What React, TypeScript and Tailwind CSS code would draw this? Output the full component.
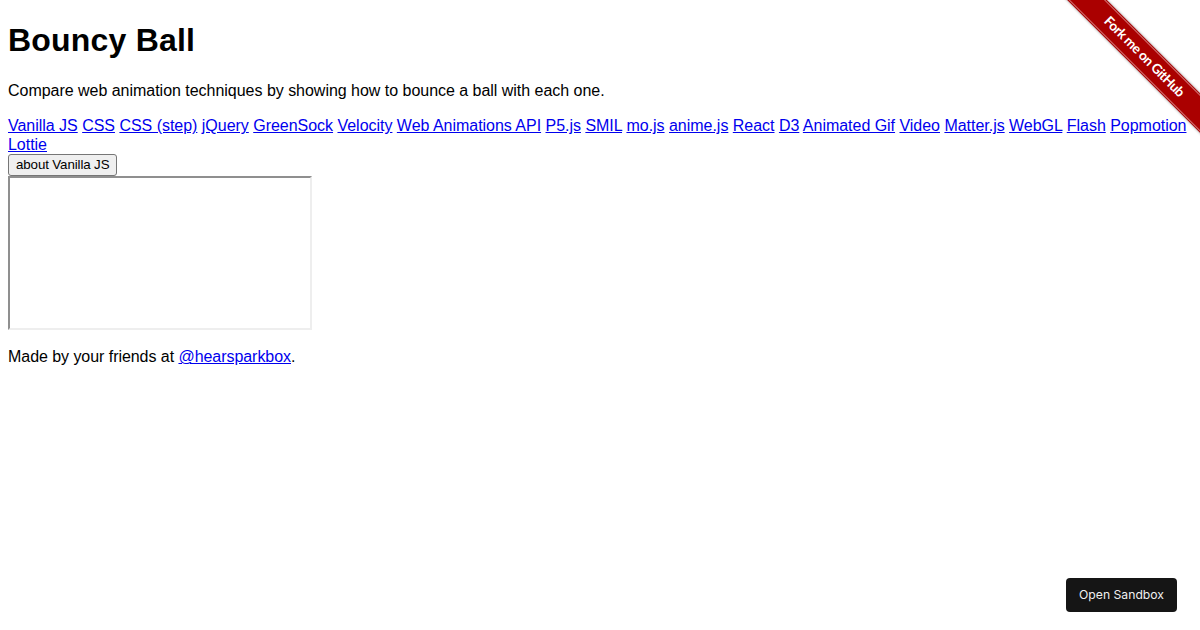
import React from 'react';

const LINKS = [
  'Vanilla JS',
  'CSS',
  'CSS (step)',
  'jQuery',
  'GreenSock',
  'Velocity',
  'Web Animations API',
  'P5.js',
  'SMIL',
  'mo.js',
  'anime.js',
  'React',
  'D3',
  'Animated Gif',
  'Video',
  'Matter.js',
  'WebGL',
  'Flash',
  'Popmotion',
  'Lottie',
];

const linkClass = 'text-[#0000ee] underline';

export default function App() {
  return (
    <div className="relative h-[630px] w-[1200px] overflow-hidden bg-white font-['Liberation_Sans',Arial,sans-serif] text-base leading-[19px] tracking-[-0.025px] text-black">
      <div className="p-2">
        <h1 className="mt-[14px] mb-[22.44px] text-[32px] leading-[37px] font-bold tracking-[0.2px]">Bouncy Ball</h1>
        <p className="my-4">Compare web animation techniques by showing how to bounce a ball with each one.</p>
        <div>
          {LINKS.map((link) => (
            <React.Fragment key={link}>
              <a href="#" className={linkClass}>{link}</a>{' '}
            </React.Fragment>
          ))}
        </div>
        <button className="block h-[22px] rounded-[3px] border border-[#767676] bg-[#efefef] px-[7px] pb-[2px] text-[13.333px] leading-[15px] tracking-[-0.12px]">
          about Vanilla JS
        </button>
        <div className="h-[154px] w-[304px] border-2 border-t-[#8f8f8f] border-r-[#eeeeee] border-b-[#eeeeee] border-l-[#8f8f8f]" />
        <p className="mt-[17px] mb-4 tracking-[-0.05px]">
          Made by your friends at <a href="#" className={linkClass}>@hearsparkbox</a>.
        </p>
      </div>

      <a
        href="#"
        className="absolute top-[55px] left-[1036px] flex h-[28px] w-[240px] rotate-45 items-center justify-center bg-[#aa0000] pr-[34px] font-['Lato',sans-serif] text-[13.5px] leading-none font-bold tracking-[-0.45px] text-white shadow-[0_0_3px_rgba(0,0,0,0.4)] outline-1 -outline-offset-2 outline-[#cf7070]"
      >
        Fork me on GitHub
      </a>

      <button className="absolute top-[578px] left-[1066px] h-[34px] w-[111px] rounded-[4px] bg-[#151515] pb-[2px] font-['Inter',sans-serif] text-[12.2px] tracking-normal text-[#f0f0f0]">
        Open Sandbox
      </button>
    </div>
  );
}
